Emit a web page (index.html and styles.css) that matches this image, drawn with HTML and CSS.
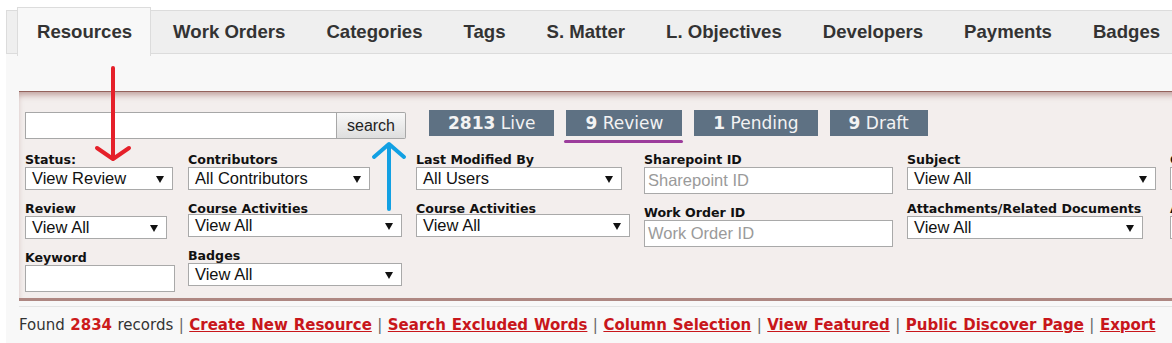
FILE: index.html
```html
<!DOCTYPE html>
<html>
<head>
<meta charset="utf-8">
<link rel="stylesheet" href="styles.css">
</head>
<body>
<div class="tabs">
  <div class="tab active">Resources</div>
  <div class="tab">Work Orders</div>
  <div class="tab">Categories</div>
  <div class="tab">Tags</div>
  <div class="tab">S. Matter</div>
  <div class="tab">L. Objectives</div>
  <div class="tab">Developers</div>
  <div class="tab">Payments</div>
  <div class="tab">Badges</div>
</div>
<div class="content">
  <div class="panel">
    <div class="toprow">
      <div class="searchbox">
        <div class="search-input"></div>
        <div class="search-btn">search</div>
      </div>
      <div class="statuses">
        <div class="status"><b>2813</b> Live</div>
        <div class="status current"><b>9</b> Review</div>
        <div class="status"><b>1</b> Pending</div>
        <div class="status"><b>9</b> Draft</div>
      </div>
    </div>
    <div class="filters">
      <div class="col c1">
        <div class="lbl">Status:</div>
        <div class="sel w148"><span>View Review</span><i class="tri"></i></div>
        <div class="lbl">Review</div>
        <div class="sel w142"><span>View All</span><i class="tri"></i></div>
        <div class="lbl">Keyword</div>
        <div class="inp w150"></div>
      </div>
      <div class="col c2">
        <div class="lbl">Contributors</div>
        <div class="sel w182"><span>All Contributors</span><i class="tri"></i></div>
        <div class="lbl">Course Activities</div>
        <div class="sel w214 up2"><span>View All</span><i class="tri"></i></div>
        <div class="lbl">Badges</div>
        <div class="sel w214"><span>View All</span><i class="tri"></i></div>
      </div>
      <div class="col c3">
        <div class="lbl">Last Modified By</div>
        <div class="sel w206"><span>All Users</span><i class="tri"></i></div>
        <div class="lbl">Course Activities</div>
        <div class="sel w214 up2"><span>View All</span><i class="tri"></i></div>
      </div>
      <div class="col c4">
        <div class="lbl">Sharepoint ID</div>
        <div class="inp w249"><span class="ph">Sharepoint ID</span></div>
        <div class="lbl">Work Order ID</div>
        <div class="inp w249"><span class="ph">Work Order ID</span></div>
      </div>
      <div class="col c5">
        <div class="lbl">Subject</div>
        <div class="sel w249"><span>View All</span><i class="tri"></i></div>
        <div class="lbl">Attachments/Related Documents</div>
        <div class="sel w236"><span>View All</span><i class="tri"></i></div>
      </div>
      <div class="col c6">
        <div class="lbl">Collections</div>
        <div class="sel w214"><span>View All</span><i class="tri"></i></div>
        <div class="lbl">Audience</div>
        <div class="sel w214"><span>View All</span><i class="tri"></i></div>
      </div>
    </div>
  </div>
  <div class="footer">
    Found <b class="count">2834</b> records <span class="sep">|</span> <a>Create New Resource</a> <span class="sep">|</span> <a>Search Excluded Words</a> <span class="sep">|</span> <a>Column Selection</a> <span class="sep">|</span> <a>View Featured</a> <span class="sep">|</span> <a>Public Discover Page</a> <span class="sep">|</span> <a>Export</a>
  </div>
</div>
<svg class="arrows" width="1172" height="343" viewBox="0 0 1172 343">
  <g fill="none" stroke="#e5202a" stroke-width="4" stroke-linecap="round" stroke-linejoin="round">
    <line x1="113" y1="68" x2="113" y2="158"/>
    <polyline points="97,148 113,159 129,148"/>
  </g>
  <g fill="none" stroke="#12a0e3" stroke-width="4" stroke-linecap="round" stroke-linejoin="round">
    <line x1="389" y1="209" x2="389" y2="145"/>
    <polyline points="374,157 389,144 404,157"/>
  </g>
</svg>
</body>
</html>
```

FILE: styles.css
```css
html, body {
  margin: 0;
  padding: 0;
  background: #ffffff;
  overflow: hidden;
  width: 1172px;
  height: 343px;
  position: relative;
}
body {
  font-family: "DejaVu Sans", Verdana, sans-serif;
  color: #222;
}
.tabs {
  margin: 10px 0 0 6px;
  height: 44px;
  box-sizing: border-box;
  background: #efefef;
  border-top: 1px solid #dcdcdc;
  border-bottom: 1px solid #dcdcdc;
  border-left: 1px solid #dcdcdc;
  display: flex;
  white-space: nowrap;
  overflow: visible;
}
.tab {
  font-family: "Liberation Sans", Arial, sans-serif;
  font-weight: bold;
  font-size: 18.6px;
  color: #333;
  padding: 0 20px;
  display: flex;
  align-items: center;
  margin-left: 1px;
  flex-shrink: 0;
}
.tab.active {
  margin: -4px 0 -3px 10px;
  background: #f8f8f8;
  border: 1px solid #dcdcdc;
  border-bottom: none;
  padding: 0 18px 0 19px;
  position: relative;
  z-index: 1;
}
.tab.active + .tab {
  margin-left: 2px;
}
.content {
  margin-left: 6px;
  background: #f8f8f8;
  padding: 37px 0 0 13px;
  height: 289px;
  box-sizing: border-box;
  overflow: hidden;
}
.panel {
  background: #f3eeed;
  border-top: 1px solid #94625c;
  border-bottom: 3px solid #ae8782;
  box-shadow: inset 0 5px 6px -2px rgba(150, 95, 90, 0.55);
  padding: 20px 0 6px 6px;
  width: 1300px;
}
.toprow {
  display: flex;
  align-items: flex-start;
  height: 27px;
}
.searchbox {
  display: flex;
}
.search-input {
  width: 310px;
  height: 25px;
  background: #fff;
  border: 1px solid #a7a7a7;
}
.search-btn {
  width: 68px;
  height: 25px;
  border: 1px solid #a7a7a7;
  border-left: none;
  background: linear-gradient(#f8f8f8, #dedede);
  font-family: "Liberation Sans", Arial, sans-serif;
  font-size: 16px;
  line-height: 25px;
  text-align: center;
  color: #222;
  border-radius: 0 2px 2px 0;
}
.statuses {
  display: flex;
  gap: 12px;
  margin-left: 23px;
  margin-top: -2px;
}
.status {
  position: relative;
  background: #5e7183;
  color: #f3f3f3;
  height: 26px;
  line-height: 26px;
  padding: 0 19px;
  font-size: 17px;
  white-space: nowrap;
}
.status.current::after {
  content: "";
  position: absolute;
  left: -2px;
  right: -1px;
  bottom: -7px;
  height: 3px;
  border-radius: 2px;
  background: #9c3d9c;
}
.filters {
  display: flex;
  gap: 14px;
  margin-top: 14px;
}
.col {
  display: flex;
  flex-direction: column;
  align-items: flex-start;
  flex-shrink: 0;
}
.c1 { width: 149px; }
.c2 { width: 214px; }
.c3 { width: 214px; }
.c4 { width: 249px; }
.c5 { width: 249px; }
.c6 { width: 214px; }
.lbl {
  font-size: 12.6px;
  font-weight: bold;
  line-height: 14px;
  color: #111;
  white-space: nowrap;
  margin-top: 12px;
}
.lbl:first-child {
  margin-top: 0;
}
.sel {
  position: relative;
  box-sizing: border-box;
  height: 23px;
  background: #fff;
  border: 1px solid #a9a9a9;
  font-family: "Liberation Sans", Arial, sans-serif;
  font-size: 16.5px;
  line-height: 21px;
  color: #111;
  padding-left: 6px;
  white-space: nowrap;
}
.sel.up2 {
  margin-top: -2px;
}
.tri {
  position: absolute;
  right: 8px;
  top: 8px;
  width: 0;
  height: 0;
  border-left: 4px solid transparent;
  border-right: 4px solid transparent;
  border-top: 7px solid #111;
}
.inp {
  box-sizing: border-box;
  height: 27px;
  background: #fff;
  border: 1px solid #a9a9a9;
  font-family: "Liberation Sans", Arial, sans-serif;
  font-size: 16.5px;
  line-height: 25px;
  padding-left: 3px;
  white-space: nowrap;
}
.ph { color: #9a9a9a; }
.w142 { width: 142px; }
.w148 { width: 148px; }
.w150 { width: 150px; }
.w182 { width: 182px; }
.w206 { width: 206px; }
.w214 { width: 214px; }
.w236 { width: 236px; }
.w249 { width: 249px; }
.footer {
  margin-top: 5px;
  border-top: 1px solid #e4e4e4;
  padding-top: 9px;
  font-size: 15px;
  line-height: 18px;
  word-spacing: 0.7px;
  color: #333;
  white-space: nowrap;
}
.footer .count {
  color: #cc1b1b;
}
.footer a {
  color: #c8161b;
  font-weight: bold;
  text-decoration: underline;
}
.footer .sep {
  color: #666;
}
.arrows {
  position: absolute;
  left: 0;
  top: 0;
  pointer-events: none;
}
```
